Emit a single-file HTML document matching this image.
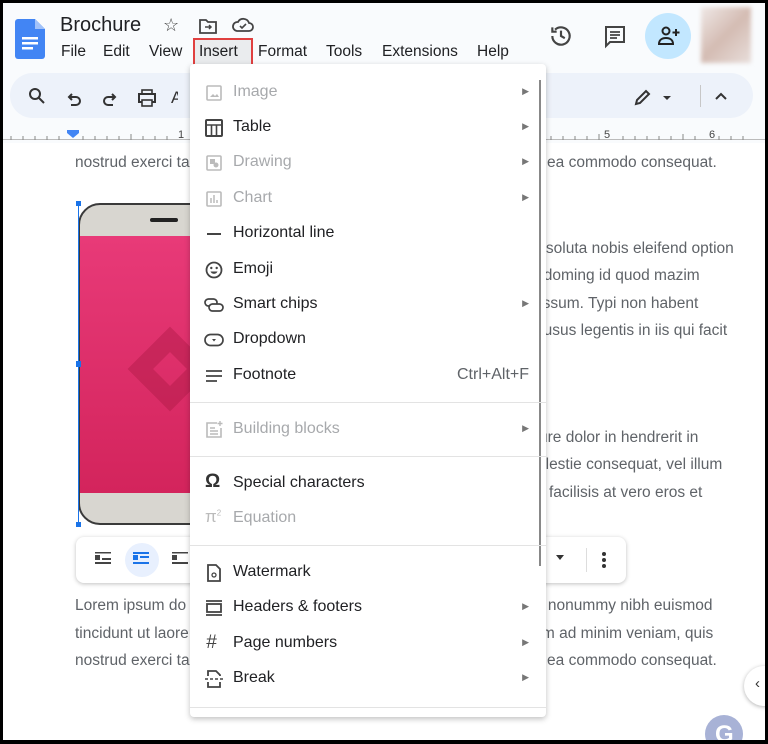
<!DOCTYPE html>
<html><head><style>
*{margin:0;padding:0;box-sizing:border-box}
body{width:768px;height:744px;background:#000;font-family:"Liberation Sans",sans-serif;overflow:hidden;position:relative}
#f{position:absolute;left:3px;top:3px;width:762px;height:737px;background:#f9fbfd;overflow:hidden}
.a{position:absolute}
.t{position:absolute;font-size:15.5px;color:#5f6368;white-space:nowrap}
.m{position:absolute;left:16px;font-size:16px;color:#202124}
.d{color:#a7a9ac}
.ic{position:absolute;left:14px;width:20px;height:20px}
.ar{position:absolute;right:17px;font-size:9px;color:#777}
.sep{position:absolute;left:0;right:0;height:1px;background:#e3e3e3}
</style></head><body><div id="f">
<svg class="a" style="left:12px;top:16px" width="30" height="40" viewBox="0 0 30 40"><path d="M3 0h17l10 10v27a3 3 0 0 1-3 3H3a3 3 0 0 1-3-3V3a3 3 0 0 1 3-3z" fill="#4285f4"/><path d="M20 0v10h10z" fill="#a1c2fa"/><rect x="7" y="18" width="16" height="2.5" fill="#fff"/><rect x="7" y="23" width="16" height="2.5" fill="#fff"/><rect x="7" y="28" width="11" height="2.5" fill="#fff"/></svg>
<div class="a" style="left:57px;top:11px;font-size:20px;color:#202124">Brochure</div>
<div class="a" style="left:160px;top:12px;font-size:18px;color:#444">☆</div>
<svg class="a" style="left:195px;top:14px" width="20" height="18"><path d="M2 3h6l2 2h8v11H2z" fill="none" stroke="#444" stroke-width="1.8"/><path d="M7 10h6m-2-2 2 2-2 2" stroke="#444" stroke-width="1.5" fill="none"/></svg>
<svg class="a" style="left:228px;top:13px" width="24" height="18"><path d="M6 15h12a4 4 0 0 0 0-8 6 6 0 0 0-11-1 4.5 4.5 0 0 0-1 9z" fill="none" stroke="#444" stroke-width="1.8"/><path d="M9 10l2 2 4-4" stroke="#444" stroke-width="1.6" fill="none"/></svg>
<div class="a" style="top:40px;left:58px;font-size:15.5px;color:#202124">
<span class="a" style="left:0">File</span><span class="a" style="left:42px">Edit</span><span class="a" style="left:88px">View</span><span class="a" style="left:138px">Insert</span><span class="a" style="left:197px">Format</span><span class="a" style="left:265px">Tools</span><span class="a" style="left:321px">Extensions</span><span class="a" style="left:416px">Help</span></div>
<div class="a" style="left:190px;top:35px;width:60px;height:28px;border:2px solid #e04040;background:rgba(0,0,0,.06)"></div>
<svg class="a" style="left:545px;top:20px" width="26" height="26" viewBox="0 0 24 24"><path d="M4 12a8 8 0 1 0 2.5-5.8M4 4v4h4M12 7v5l3.5 2" fill="none" stroke="#444" stroke-width="2"/></svg>
<svg class="a" style="left:600px;top:20px" width="24" height="26" viewBox="0 0 24 24"><path d="M3 3h18v15H7l-4 4z" fill="none" stroke="#444" stroke-width="2"/><path d="M7 8h10M7 11h10M7 14h7" stroke="#444" stroke-width="1.8"/></svg>
<div class="a" style="left:642px;top:10px;width:46px;height:46px;border-radius:50%;background:#c2e7ff"></div>
<svg class="a" style="left:654px;top:22px" width="24" height="22" viewBox="0 0 24 22"><circle cx="9" cy="6" r="3.5" fill="none" stroke="#222" stroke-width="2"/><path d="M2 19c0-4 3-6 7-6s7 2 7 6z" fill="none" stroke="#222" stroke-width="2"/><path d="M19 4v7M15.5 7.5h7" stroke="#222" stroke-width="2"/></svg>
<div class="a" style="left:698px;top:4px;width:50px;height:56px;background:linear-gradient(135deg,#efe8e6,#d4bcb3 50%,#e8dedb);filter:blur(2px)"></div>
<div class="a" style="left:7px;top:70px;width:743px;height:45px;border-radius:23px;background:#edf2fa"></div>
<svg class="a" style="left:25px;top:84px" width="150" height="22"><circle cx="7" cy="7" r="5" fill="none" stroke="#333" stroke-width="2"/><path d="M11 11l5 5" stroke="#333" stroke-width="2"/><path d="M42 10h6a4 4 0 0 1 0 8h-5M44 7l-3 3 3 3" fill="none" stroke="#333" stroke-width="2"/><path d="M86 10h-6a4 4 0 0 0 0 8h5M84 7l3 3-3 3" fill="none" stroke="#333" stroke-width="2"/><rect x="111" y="7" width="16" height="8" fill="none" stroke="#333" stroke-width="2"/><rect x="114" y="3" width="10" height="4" fill="none" stroke="#333" stroke-width="1.6"/><rect x="114" y="13" width="10" height="6" fill="#edf2fa" stroke="#333" stroke-width="1.6"/><text x="143" y="16" font-size="17" fill="#333" font-family="Liberation Sans">A</text></svg>
<svg class="a" style="left:630px;top:84px" width="40" height="20"><path d="M3 17l1-4 9-9 3 3-9 9z" fill="none" stroke="#333" stroke-width="2"/><path d="M30 9h8l-4 4z" fill="#333"/></svg>
<div class="a" style="left:697px;top:82px;width:1px;height:22px;background:#c7c7c7"></div>
<svg class="a" style="left:710px;top:86px" width="16" height="14"><path d="M3 10l5-5 5 5" fill="none" stroke="#333" stroke-width="2"/></svg>
<div class="a" style="left:0;top:136px;width:762px;height:1px;background:#bbb"></div>
<svg class="a" style="left:0;top:124px" width="762" height="14">
<g stroke="#888" stroke-width="1"><path d="M8 9v4M20 9v4M32 9v4M44 9v4M56 9v4M80 9v4M92 9v4M104 9v4M116 9v4M128 7v6M140 9v4M152 9v4M164 9v4M548 9v4M560 9v4M572 9v4M584 9v4M596 7v6M620 9v4M632 9v4M644 9v4M656 9v4M668 9v4M680 7v6M692 9v4M716 9v4M728 9v4M740 9v4"/></g>
<path d="M64 3h12v3l-6 5-6-5z" fill="#4285f4"/>
<text x="175" y="11" font-size="11" fill="#444" font-family="Liberation Sans">1</text>
<text x="601" y="11" font-size="11" fill="#444" font-family="Liberation Sans">5</text>
<text x="706" y="11" font-size="11" fill="#444" font-family="Liberation Sans">6</text></svg>
<div class="a" style="left:0;top:140px;width:762px;height:600px;background:#fff"></div>
<div class="t" style="left:72px;top:151px">nostrud exerci ta</div>
<div class="t" style="left:532px;top:151px">x ea commodo consequat.</div>
<div class="t" style="left:530px;top:237px">a soluta nobis eleifend option</div>
<div class="t" style="left:533px;top:264px">i doming id quod mazim</div>
<div class="t" style="left:531px;top:292px">assum. Typi non habent</div>
<div class="t" style="left:532px;top:319px">: usus legentis in iis qui facit</div>
<div class="t" style="left:536px;top:426px">ure dolor in hendrerit in</div>
<div class="t" style="left:534px;top:453px">olestie consequat, vel illum</div>
<div class="t" style="left:546px;top:481px">facilisis at vero eros et</div>
<div class="t" style="left:72px;top:594px">Lorem ipsum do</div>
<div class="t" style="left:72px;top:622px">tincidunt ut laore</div>
<div class="t" style="left:72px;top:649px">nostrud exerci ta</div>
<div class="t" style="left:532px;top:594px">n nonummy nibh euismod</div>
<div class="t" style="left:532px;top:622px">iim ad minim veniam, quis</div>
<div class="t" style="left:532px;top:649px">x ea commodo consequat.</div>
<div class="a" style="left:75px;top:200px;width:130px;height:322px;border:2px solid #3a3a3a;border-radius:22px 0 0 22px;background:#d8d6d0;overflow:hidden">
<div class="a" style="left:70px;top:13px;width:28px;height:4px;border-radius:2px;background:#222"></div>
<div class="a" style="left:0;top:31px;width:130px;height:257px;background:linear-gradient(#e83a78,#d3245c)"></div>
<div class="a" style="left:60px;top:134px;width:60px;height:60px;transform:rotate(45deg);border:18px solid rgba(160,20,60,.35)"></div>
</div>
<div class="a" style="left:73px;top:198px;width:5px;height:5px;background:#1a73e8"></div>
<div class="a" style="left:73px;top:358px;width:5px;height:6px;background:#1a73e8"></div>
<div class="a" style="left:73px;top:519px;width:5px;height:5px;background:#1a73e8"></div>
<div class="a" style="left:75px;top:200px;width:1px;height:322px;background:#1a73e8"></div>
<div class="a" style="left:73px;top:534px;width:550px;height:46px;background:#fff;border-radius:8px;box-shadow:0 1px 4px rgba(0,0,0,.25)"></div>
<div class="a" style="left:122px;top:540px;width:34px;height:34px;border-radius:50%;background:#e8f0fe"></div>
<svg class="a" style="left:92px;top:549px" width="100" height="16"><g fill="#444"><rect x="0" y="3" width="5" height="5"/><rect x="0" y="10" width="16" height="2"/><rect x="7" y="6" width="9" height="2"/><rect x="0" y="0" width="16" height="1.5"/></g><g fill="#1a73e8"><rect x="38" y="3" width="5" height="5"/><rect x="38" y="0" width="16" height="2"/><rect x="45" y="4" width="9" height="2"/><rect x="38" y="10" width="16" height="2"/></g><g fill="#444"><rect x="77" y="3" width="5" height="5"/><rect x="77" y="0" width="16" height="1.5"/><rect x="77" y="10" width="16" height="2"/></g></svg>
<svg class="a" style="left:553px;top:552px" width="8" height="6"><path d="M0 0h8l-4 5z" fill="#333"/></svg>
<div class="a" style="left:583px;top:545px;width:1px;height:24px;background:#ddd"></div>
<svg class="a" style="left:598px;top:548px" width="6" height="18"><circle cx="3" cy="3" r="2" fill="#333"/><circle cx="3" cy="9" r="2" fill="#333"/><circle cx="3" cy="15" r="2" fill="#333"/></svg>
<div class="a" style="left:741px;top:663px;width:40px;height:40px;border-radius:50%;background:#fff;box-shadow:0 1px 4px rgba(0,0,0,.3)"></div>
<div class="a" style="left:752px;top:672px;font-size:15px;color:#333">‹</div>
<div class="a" style="left:702px;top:712px;width:38px;height:38px;border-radius:50%;background:#a8b2d6"></div>
<div class="a" style="left:712px;top:718px;font-size:24px;color:#fff;font-weight:bold">G</div>
<div class="a" style="left:187px;top:61px;width:356px;height:653px;background:#fff;border-radius:4px;box-shadow:0 2px 6px rgba(0,0,0,.25)">
<div class="a" style="left:349px;top:16px;width:2px;height:486px;background:#888"></div>
<svg class="ic" style="top:19px" viewBox="0 0 20 20"><rect x="3" y="3" width="14" height="14" rx="1" fill="none" stroke="#bbb" stroke-width="1.6"/><path d="M6 14l3-3 2 2 2-2 2 3z" fill="#bbb"/></svg>
<div class="m d" style="left:43px;top:19px">Image</div><div class="ar" style="top:22px">▶</div>
<svg class="ic" style="top:54px" viewBox="0 0 20 20"><rect x="2" y="2" width="16" height="16" rx="1" fill="none" stroke="#444" stroke-width="2"/><path d="M2 7h16M7.5 7v11M12.5 7v11" stroke="#444" stroke-width="1.6"/></svg>
<div class="m" style="left:43px;top:54px">Table</div><div class="ar" style="top:57px">▶</div>
<svg class="ic" style="top:89px" viewBox="0 0 20 20"><rect x="3" y="3" width="14" height="14" rx="1" fill="none" stroke="#bbb" stroke-width="1.6"/><rect x="6" y="6" width="5" height="5" fill="#bbb"/><circle cx="12" cy="12" r="2.5" fill="#bbb"/></svg>
<div class="m d" style="left:43px;top:89px">Drawing</div><div class="ar" style="top:92px">▶</div>
<svg class="ic" style="top:125px" viewBox="0 0 20 20"><rect x="3" y="3" width="14" height="14" rx="1" fill="none" stroke="#bbb" stroke-width="1.6"/><path d="M7 14V9M10 14V6M13 14v-3" stroke="#bbb" stroke-width="1.5"/></svg>
<div class="m d" style="left:43px;top:125px">Chart</div><div class="ar" style="top:128px">▶</div>
<svg class="ic" style="top:160px" viewBox="0 0 20 20"><path d="M3 10h14" stroke="#444" stroke-width="2"/></svg>
<div class="m" style="left:43px;top:160px">Horizontal line</div>
<svg class="ic" style="top:196px" viewBox="0 0 20 20"><circle cx="10" cy="10" r="7.5" fill="none" stroke="#444" stroke-width="1.8"/><circle cx="7.3" cy="8" r="1.2" fill="#444"/><circle cx="12.7" cy="8" r="1.2" fill="#444"/><path d="M6.5 11.5a3.8 3.8 0 0 0 7 0z" fill="#444"/></svg>
<div class="m" style="left:43px;top:196px">Emoji</div>
<svg class="ic" style="top:231px" viewBox="0 0 20 20"><rect x="1" y="4" width="12" height="7" rx="3.5" fill="none" stroke="#444" stroke-width="1.7"/><rect x="5" y="9" width="14" height="7" rx="3.5" fill="#fff" stroke="#444" stroke-width="1.7"/></svg>
<div class="m" style="left:43px;top:231px">Smart chips</div><div class="ar" style="top:234px">▶</div>
<svg class="ic" style="top:266px" viewBox="0 0 20 20"><rect x="1" y="4.5" width="18" height="11" rx="5.5" fill="none" stroke="#444" stroke-width="1.7"/><path d="M8 9h4l-2 2.5z" fill="#444"/></svg>
<div class="m" style="left:43px;top:266px">Dropdown</div>
<svg class="ic" style="top:302px" viewBox="0 0 20 20"><path d="M2 5h16M2 10h16M2 15h11" stroke="#444" stroke-width="1.8"/></svg>
<div class="m" style="left:43px;top:302px">Footnote</div><div class="a" style="right:17px;top:302px;font-size:16px;color:#5f6368">Ctrl+Alt+F</div>
<div class="sep" style="top:338px"></div>
<svg class="ic" style="top:356px" viewBox="0 0 20 20"><path d="M13 3H3v14h14V8" fill="none" stroke="#bbb" stroke-width="1.6"/><path d="M6 8h5M6 11h8M6 14h8M16 1v5M13.5 3.5h5" stroke="#bbb" stroke-width="1.4"/></svg>
<div class="m d" style="left:43px;top:356px">Building blocks</div><div class="ar" style="top:359px">▶</div>
<div class="sep" style="top:392px"></div>
<div class="a" style="left:15px;top:407px;font-size:19px;color:#333;font-weight:bold">Ω</div>
<div class="m" style="left:43px;top:410px">Special characters</div>
<div class="a d" style="left:15px;top:443px;font-size:17px;color:#bbb">π<sup style="font-size:8px">2</sup></div>
<div class="m d" style="left:43px;top:445px">Equation</div>
<div class="sep" style="top:481px"></div>
<svg class="ic" style="top:499px" viewBox="0 0 20 20"><path d="M4 2h8l4 4v12H4z" fill="none" stroke="#444" stroke-width="1.8"/><circle cx="10" cy="12" r="2" fill="none" stroke="#444" stroke-width="1.3"/></svg>
<div class="m" style="left:43px;top:499px">Watermark</div>
<svg class="ic" style="top:534px" viewBox="0 0 20 20"><path d="M2 3h16M2 17h16" stroke="#444" stroke-width="1.8"/><rect x="3" y="6" width="14" height="8" fill="none" stroke="#444" stroke-width="1.8"/></svg>
<div class="m" style="left:43px;top:534px">Headers &amp; footers</div><div class="ar" style="top:537px">▶</div>
<div class="a" style="left:16px;top:568px;font-size:19px;color:#444;font-style:italic">#</div>
<div class="m" style="left:43px;top:570px">Page numbers</div><div class="ar" style="top:573px">▶</div>
<svg class="ic" style="top:605px" viewBox="0 0 20 20"><path d="M4 7V2h8l4 4v1M4 13v5h12v-5" fill="none" stroke="#444" stroke-width="1.8"/><path d="M1 10h3M6 10h3M11 10h3M16 10h3" stroke="#444" stroke-width="1.6"/></svg>
<div class="m" style="left:43px;top:605px">Break</div><div class="ar" style="top:608px">▶</div>
<div class="sep" style="top:643px"></div>
</div>
</div></body></html>
